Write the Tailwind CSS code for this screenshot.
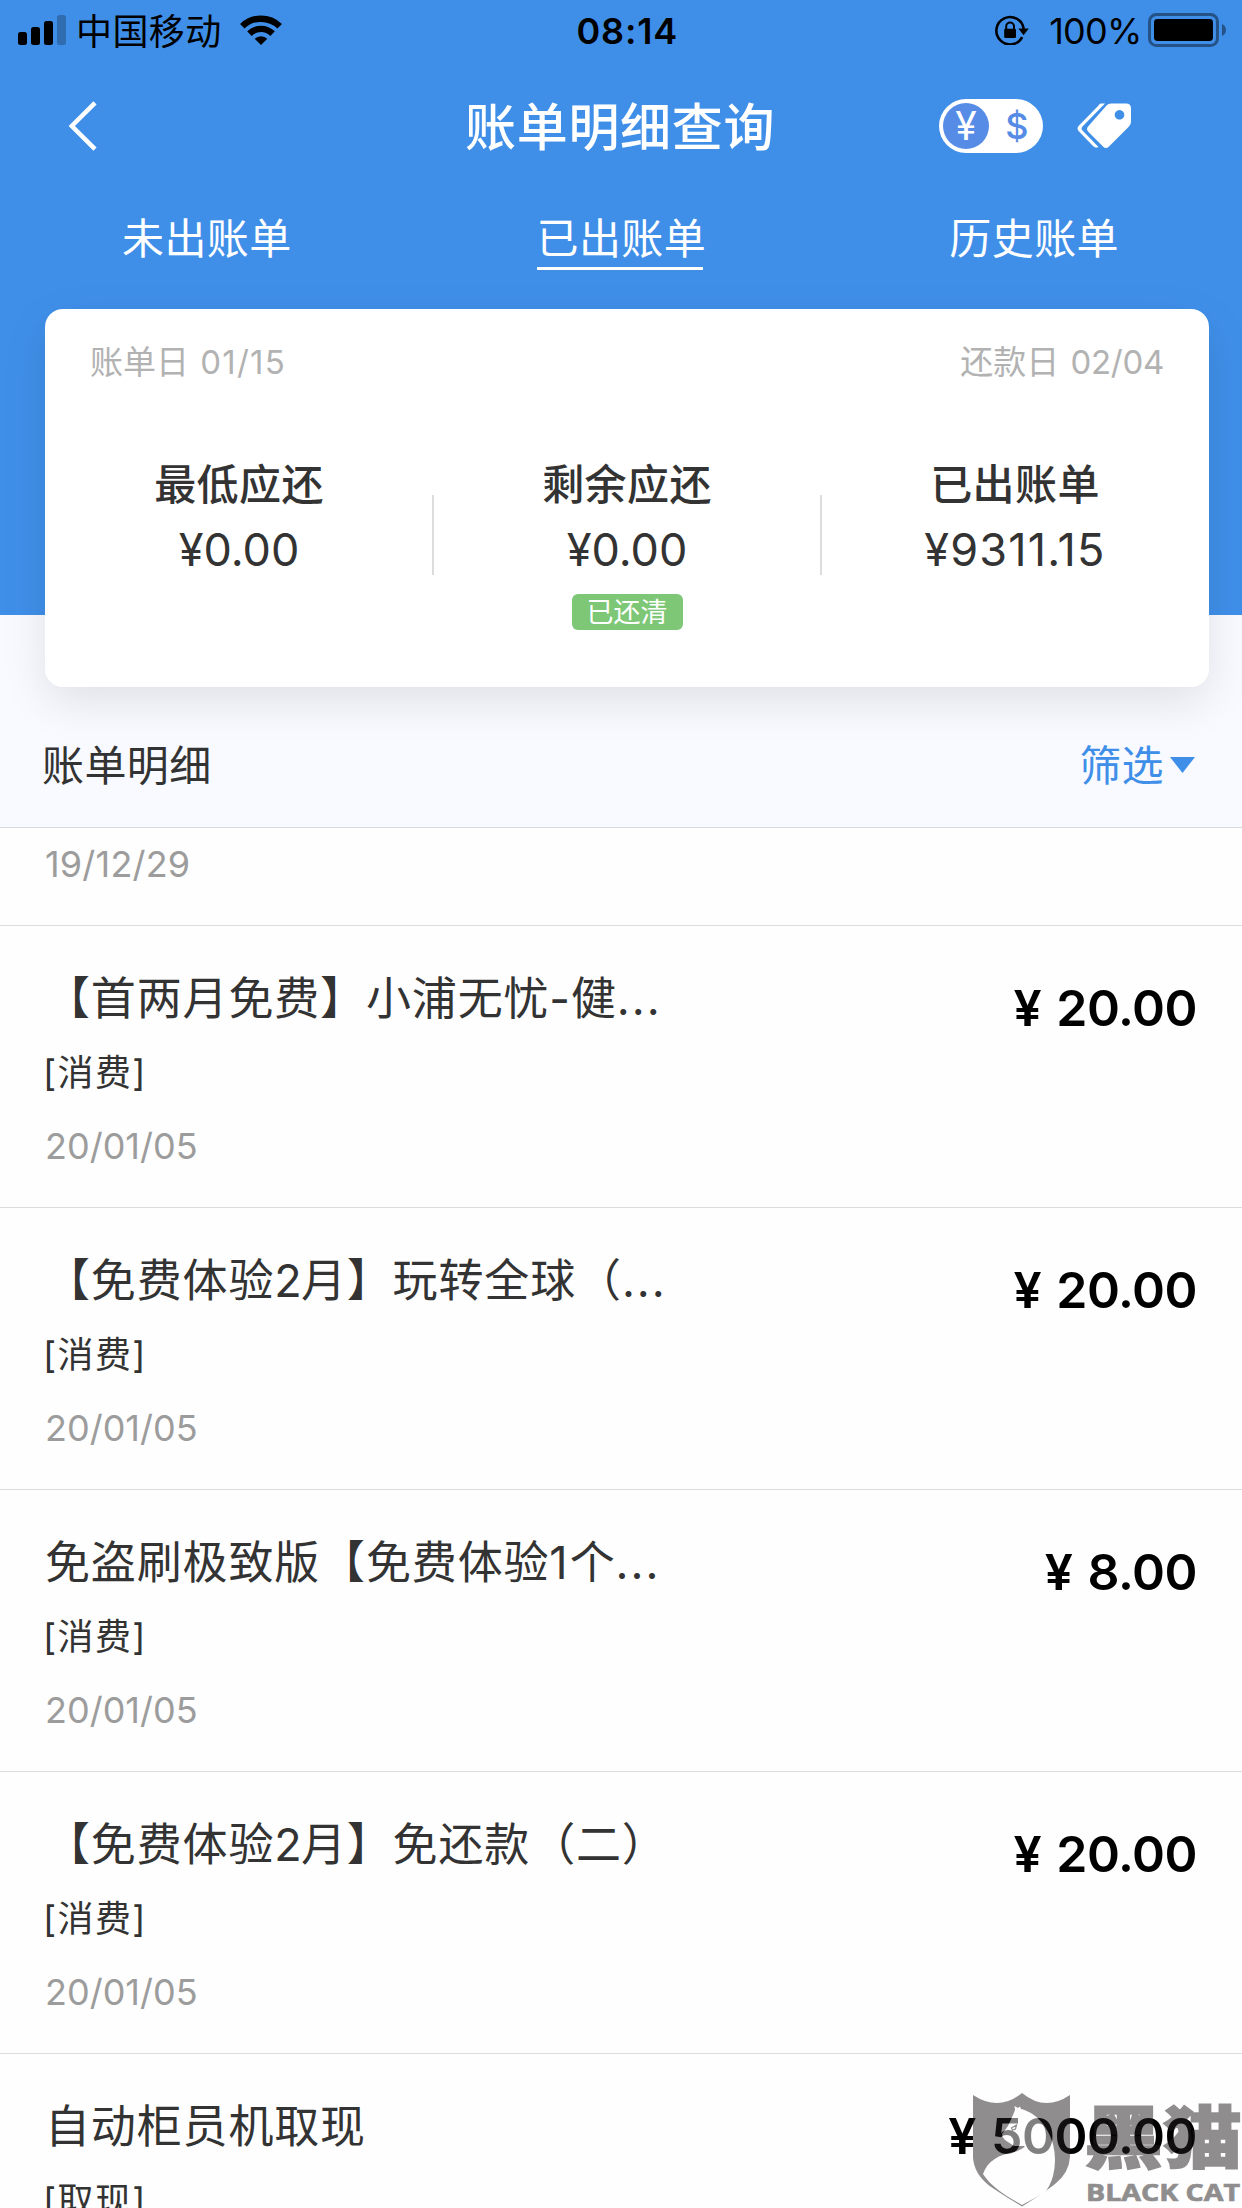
<!DOCTYPE html>
<html lang="zh-CN">
<head>
<meta charset="utf-8">
<title>账单明细查询</title>
<script src="https://cdn.jsdelivr.net/npm/@tailwindcss/browser@4"></script>
</head>
<body class="relative h-[2208px] w-[1242px] overflow-hidden bg-[#fefefe] font-['Inter','Noto_Sans_CJK_SC',sans-serif] text-[#333]">

<header class="h-[615px] bg-[#3f8fe9]">
  <!-- status bar -->
  <div class="flex h-[60px] items-center pl-[18px] pr-[15px] text-[36px] leading-[60px] text-black">
    <div class="flex w-[559px] items-center">
      <svg class="h-[30px] w-[48px]" viewBox="0 0 48 30">
        <rect x="0" y="17" width="9" height="13" rx="2.5"/>
        <rect x="13" y="12" width="9" height="18" rx="2.5"/>
        <rect x="26" y="6" width="9" height="24" rx="2.5"/>
        <rect x="39" y="0" width="9" height="30" rx="2.5" fill="#2f6cb0"/>
      </svg>
      <span class="ml-[10px] w-[146px] whitespace-nowrap pt-[4px] leading-[56px] tracking-[0.4px]">中国移动</span>
      <svg class="ml-[18px] h-[30px] w-[42px]" viewBox="0 0 42 30">
        <g fill="none" stroke="#000" stroke-width="6.4">
          <path d="M2.3 11.2A27 27 0 0 1 39.7 11.2"/>
          <path d="M9.4 18.6A16.6 16.6 0 0 1 32.6 18.6"/>
        </g>
        <path d="M21 30l-6.3-6.2a9 9 0 0 1 12.6 0z"/>
      </svg>
    </div>
    <span class="w-[419px] pt-[3px] font-semibold leading-[57px] tracking-[0.8px]">08:14</span>
    <svg class="h-[30px] w-[36px]" viewBox="0 0 36 30">
      <path d="M27.2 22.2A13.7 13.7 0 1 1 28.7 14" fill="none" stroke="#000" stroke-width="2.6"/>
      <path d="M23.4 13.6h10.4l-5.2 6.6z"/>
      <rect x="9.2" y="13.7" width="11.8" height="9.3" rx="1.2"/>
      <path d="M11.2 14v-2.6a3.9 3.9 0 0 1 7.8 0V14" fill="none" stroke="#000" stroke-width="2"/>
    </svg>
    <span class="ml-[18px] w-[99px] pt-[3px] leading-[57px] tracking-[-0.7px]">100%</span>
    <svg class="h-[34px] w-[79px]" viewBox="0 0 79 34">
      <rect x="1.5" y="1.5" width="68" height="31" rx="7" fill="none" stroke="#245286" stroke-width="3"/>
      <rect x="6" y="6" width="59" height="22" rx="3.5"/>
      <path d="M74 11c2.500 1 4 3 4 6s-1.500 5-4 6z" fill="#245286"/>
    </svg>
  </div>

  <!-- navigation -->
  <div class="flex h-[132px] items-center pl-[68px] text-white">
    <svg class="h-[50px] w-[30px]" viewBox="0 0 30 50"><path d="M27 1.800L3.800 25 27 48.200" fill="none" stroke="#fff" stroke-width="4.500"/></svg>
    <h1 class="ml-[367px] w-[474px] pt-[3px] text-[51px] font-medium leading-[57px] tracking-[0.7px]">账单明细查询</h1>
    <div class="flex h-[54px] w-[104px] items-center rounded-full bg-white p-1">
      <span class="h-[46px] w-[46px] rounded-full bg-[#568ce6] text-center text-[39px] leading-[46px]">¥</span>
      <span class="w-[50px] pl-[6px] text-center text-[36px] font-medium leading-[44px] text-[#568ce6]">$</span>
    </div>
    <svg class="ml-[34px] h-[46px] w-[55px]" viewBox="0 0 55 46" fill="#fff">
      <path fill-rule="evenodd" d="M30 2Q31.500.500 34 .500h15q5 0 5 5v13q0 3-2 5L32 43.500q-3 3-6 0L11.500 29q-3-3 0-6zM42.500 7a4.800 4.800 0 1 0 .01 0z"/>
      <path d="M24 .500h4L5.500 23.500q-2 2 0 4L21.500 44q-3 1.500-5.500-1L2 28.500q-3-3 0-6L21.500 2.500Q22.500.500 24 .500z"/>
    </svg>
  </div>

  <!-- tabs -->
  <nav class="grid grid-cols-3 justify-items-center whitespace-nowrap pt-[18px] pr-[1px] text-[42px] leading-[57px] tracking-[0.4px] text-white">
    <span>未出账单</span>
    <span class="w-[166px] border-b-[3px] border-white"><span class="-ml-[1px]">已出账单</span></span>
    <span>历史账单</span>
  </nav>
</header>

<section class="flex h-[213px] flex-col border-b border-[#d9dade] bg-[#f8faff]">
  <!-- summary card -->
  <div class="-mt-[306px] ml-[45px] h-[378px] w-[1164px] shrink-0 rounded-[18px] bg-white shadow-[0_15px_45px_rgba(0,0,0,0.1)]">
    <div class="flex justify-between pt-[29px] pl-[45px] pr-[45px] text-[33px] leading-[48px] text-[#b2b2b2]">
      <span>账单日 <span class="ml-[2px] tracking-[1.2px]">01/15</span></span>
      <span>还款日 <span class="ml-[2px] tracking-[-0.3px]">02/04</span></span>
    </div>
    <div class="grid grid-cols-3 pt-[69px] text-center">
      <div>
        <div class="text-[42px] font-medium leading-[60px] tracking-[0.4px]">最低应还</div>
        <div class="mt-[5px] text-[45px] leading-[60px]">¥0.00</div>
      </div>
      <div class="flex flex-col items-center">
        <div class="text-[42px] font-medium leading-[60px] tracking-[0.4px]">剩余应还</div>
        <div class="mt-[5px] text-[45px] leading-[60px]">¥0.00</div>
        <div class="mt-[14px] h-9 w-[111px] rounded-[6px] bg-[#7dc776] pt-[2px] text-[27px] leading-[34px] text-white">已还清</div>
      </div>
      <div>
        <div class="text-[42px] font-medium leading-[60px] tracking-[0.4px]">已出账单</div>
        <div class="mt-[5px] text-[45px] leading-[60px] tracking-[1.2px]">¥9311.15</div>
      </div>
    </div>
    <div class="-mt-[135px] grid grid-cols-3">
      <div class="h-20 translate-x-px border-r-2 border-[#dcdcdc]"></div>
      <div class="h-20 translate-x-px border-r-2 border-[#dcdcdc]"></div>
    </div>
  </div>
  <div class="mt-[49px] flex items-center justify-between pl-[42px] pr-[47px] text-[42px] leading-[60px] tracking-[0.4px]">
    <h2>账单明细</h2>
    <div class="flex items-center text-[#3f8fe9]">
      <span>筛选</span>
      <svg class="mb-[2px] ml-[6px] h-[16px] w-[25px]" viewBox="0 0 25 16"><path d="M0 0h25L12.500 16z" fill="#3f8fe9"/></svg>
    </div>
  </div>
</section>

<main>
  <div class="h-[98px] border-b border-[#dcdcdc] pl-[45px] pt-[12px] text-[36px] leading-[48px] tracking-[0.2px] text-[#9c9c9c]">19/12/29</div>

  <article class="flex h-[282px] justify-between border-b border-[#dcdcdc] pl-[45px] pr-[45px]">
    <div>
      <h3 class="pt-[43px] text-[45px] leading-[60px] tracking-[0.85px]">【首两月免费】小浦无忧-健<span class="tracking-[2px]">...</span></h3>
      <p class="-ml-[2px] mt-[20px] text-[36px] leading-[48px] tracking-[1.4px]">[消费]</p>
      <p class="mt-[25px] text-[36px] leading-[48px] text-[#9c9c9c]">20/01/05</p>
    </div>
    <div class="pt-[52px] text-[50px] font-semibold leading-[60px] tracking-[-0.5px] text-black [word-spacing:3px]">¥ 20.00</div>
  </article>

  <article class="flex h-[282px] justify-between border-b border-[#dcdcdc] pl-[45px] pr-[45px]">
    <div>
      <h3 class="pt-[43px] text-[45px] leading-[60px] tracking-[0.85px]">【免费体验<span class="tracking-[-0.8px]">2</span>月】玩转全球（<span class="tracking-[2px]">...</span></h3>
      <p class="-ml-[2px] mt-[20px] text-[36px] leading-[48px] tracking-[1.4px]">[消费]</p>
      <p class="mt-[25px] text-[36px] leading-[48px] text-[#9c9c9c]">20/01/05</p>
    </div>
    <div class="pt-[52px] text-[50px] font-semibold leading-[60px] tracking-[-0.5px] text-black [word-spacing:3px]">¥ 20.00</div>
  </article>

  <article class="flex h-[282px] justify-between border-b border-[#dcdcdc] pl-[45px] pr-[45px]">
    <div>
      <h3 class="pt-[43px] text-[45px] leading-[60px] tracking-[0.85px]">免盗刷极致版【免费体验<span class="tracking-[2px]">1</span>个<span class="tracking-[2px]">...</span></h3>
      <p class="-ml-[2px] mt-[20px] text-[36px] leading-[48px] tracking-[1.4px]">[消费]</p>
      <p class="mt-[25px] text-[36px] leading-[48px] text-[#9c9c9c]">20/01/05</p>
    </div>
    <div class="pt-[52px] text-[50px] font-semibold leading-[60px] tracking-[-0.5px] text-black [word-spacing:3px]">¥ 8.00</div>
  </article>

  <article class="flex h-[282px] justify-between border-b border-[#dcdcdc] pl-[45px] pr-[45px]">
    <div>
      <h3 class="pt-[43px] text-[45px] leading-[60px] tracking-[0.85px]">【免费体验<span class="tracking-[-0.8px]">2</span>月】免还款（二）</h3>
      <p class="-ml-[2px] mt-[20px] text-[36px] leading-[48px] tracking-[1.4px]">[消费]</p>
      <p class="mt-[25px] text-[36px] leading-[48px] text-[#9c9c9c]">20/01/05</p>
    </div>
    <div class="pt-[52px] text-[50px] font-semibold leading-[60px] tracking-[-0.5px] text-black [word-spacing:3px]">¥ 20.00</div>
  </article>

  <article class="flex h-[154px] justify-between overflow-hidden pl-[45px] pr-[45px]">
    <div>
      <h3 class="pt-[43px] text-[45px] leading-[60px] tracking-[0.85px]">自动柜员机取现</h3>
      <p class="-ml-[2px] mt-[20px] text-[36px] leading-[48px] tracking-[1.4px]">[取现]</p>
    </div>
    <div class="pt-[52px] text-[50px] font-semibold leading-[60px] tracking-[-0.5px] text-black [word-spacing:3px]">¥ 5000.00</div>
  </article>
</main>

<!-- watermark: shield emblem with brand name -->
<svg class="absolute bottom-0 right-0 h-[118px] w-[272px]" viewBox="970 2090 272 118">
  <g opacity="0.5">
    <path d="M973 2095q26 17 49-2q23 19 48 2v62q-1 16-15 27q-10 8-33 22.500q-20-12-33-21q-15-12-16-28z" fill="#241e20"/>
    <path d="M1014.500 2106l3.500 2 2-1.500 1 2.500c16 4 27 18 32 35q4 16 0 32-3 11-9 17l-22 12c-14-8-31-18-39-31 5-14 16-19 31-22q8-2 11-6h-11l-9-6q-3-3-3-6l6-8 5-11 2-5z" fill="#fff"/>
    <path d="M1011.500 2128l5-3-1 4-3 1z" fill="none" stroke="#241e20" stroke-width="1.200"/>
    <text x="1084" y="2163" textLength="158" lengthAdjust="spacingAndGlyphs" font-family="Noto Sans CJK SC, sans-serif" font-weight="900" font-size="68" fill="#241e20" stroke="#241e20" stroke-width="1.500">黑猫</text>
    <text x="1086" y="2200.500" textLength="154" lengthAdjust="spacingAndGlyphs" font-family="Open Sans, sans-serif" font-weight="700" font-size="23" fill="#241e20" stroke="#241e20" stroke-width=".7">BLACK CAT</text>
  </g>
</svg>
</body>
</html>
